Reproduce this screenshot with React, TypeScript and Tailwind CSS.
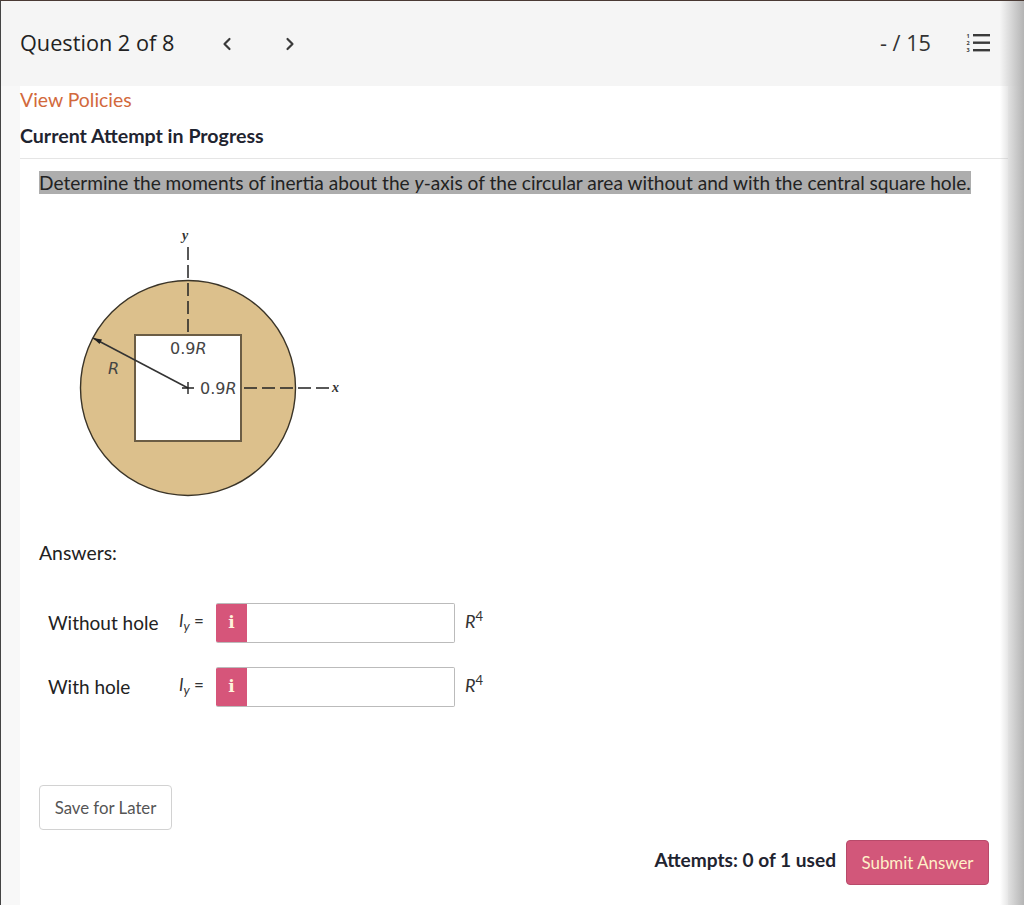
import React from 'react';
import { ChevronLeft, ChevronRight } from 'lucide-react';

function NumberedListIcon() {
  return (
    <svg width="24" height="21" viewBox="0 0 24 21" className="text-[#3a3a3a]">
      <rect x="7" y="2" width="17" height="2.4" fill="currentColor" />
      <rect x="7" y="9.5" width="17" height="2.4" fill="currentColor" />
      <rect x="7" y="17" width="17" height="2.4" fill="currentColor" />
      <text x="0.5" y="5.5" fontSize="5.5" fontWeight="700" fill="currentColor">1</text>
      <text x="0.5" y="12.5" fontSize="5.5" fontWeight="700" fill="currentColor">2</text>
      <text x="0.5" y="19.5" fontSize="5.5" fontWeight="700" fill="currentColor">3</text>
    </svg>
  );
}

function Figure() {
  return (
    <svg width="300" height="290" viewBox="0 0 300 290" className="block">
      <circle cx="128" cy="168" r="107.5" fill="#dcc08c" stroke="#3a3428" strokeWidth="1.4" />
      <rect x="75" y="115" width="106" height="106" fill="#fff" stroke="#6b5d45" strokeWidth="2" />
      <path d="M128 27V115" stroke="#222" strokeWidth="1.5" strokeDasharray="13 5" />
      <path d="M184 168H271" stroke="#222" strokeWidth="1.5" strokeDasharray="13 5" />
      <path d="M33 118L128 168" stroke="#333" strokeWidth="1.5" />
      <path d="M33 118L42 119.5L39.5 124Z" fill="#222" />
      <path d="M122 168H134M128 162V174" stroke="#222" strokeWidth="1.4" />
      <g fontFamily="'DejaVu Sans', sans-serif" fontSize="16" fill="#444">
        <text x="110" y="134">0.9<tspan fontStyle="italic">R</tspan></text>
        <text x="140" y="174">0.9<tspan fontStyle="italic">R</tspan></text>
        <text x="48" y="154" fontStyle="italic">R</text>
      </g>
      <g fontFamily="'Liberation Serif', serif" fontSize="14" fontWeight="700" fontStyle="italic" fill="#333">
        <text x="122" y="20">y</text>
        <text x="272" y="172">x</text>
      </g>
    </svg>
  );
}

function AnswerRow({ label }: { label: string }) {
  return (
    <div className="flex items-center h-10">
      <span className="w-[131px] text-[19px] text-[#222]">{label}</span>
      <span className="w-[37px] text-[17px] text-[#333] -mt-1">
        <i>I</i>
        <sub className="italic text-[13px]">y</sub> =
      </span>
      <div className="flex w-[239px] h-10 rounded-[2px] overflow-hidden border border-[#bbb] border-l-0">
        <div className="w-[31px] bg-[#d6557a] flex items-center justify-center text-[#fff3dc] font-bold text-[17px] font-['DejaVu_Serif',serif]">
          i
        </div>
        <input className="flex-1 min-w-0 bg-white outline-none" />
      </div>
      <span className="ml-[10px] text-[18px] text-[#333] -mt-1">
        <i>R</i>
        <sup className="text-[13px]">4</sup>
      </span>
    </div>
  );
}

export default function App() {
  return (
    <div className="relative w-[1024px] h-[905px] overflow-hidden flex flex-col bg-[#f8f8f8] border-t border-l border-t-[#4a3a34] border-l-[#444] font-['Lato',sans-serif]">
      <header className="h-[85px] shrink-0 bg-[#f5f5f5] flex items-center pl-[19px] pr-[34px] text-[#222] font-['Open_Sans',sans-serif]">
        <span className="text-[21.7px] w-[197px] -mt-[1px]">Question 2 of 8</span>
        <ChevronLeft size={20} strokeWidth={2.6} className="text-[#3a3a3a]" />
        <ChevronRight size={20} strokeWidth={2.6} className="text-[#3a3a3a] ml-[43px]" />
        <span className="ml-auto text-[21.7px] text-[#333] -mt-[1px]">- / 15</span>
        <span className="ml-[35px] -mt-[2px]"><NumberedListIcon /></span>
      </header>

      <div className="flex flex-1 min-h-0">
        <div className="w-[19px] shrink-0" />
        <main className="w-[988px] bg-white flex flex-col">
          <a className="text-[19.4px] leading-[27px] text-[#d2693c]">View Policies</a>
          <h2 className="text-[19.6px] leading-[27px] font-bold text-[#1f2430] mt-[9px] pb-[9px] border-b border-[#e5e5e5]">
            Current Attempt in Progress
          </h2>

          <div className="relative flex-1 pl-[19px] pr-[30px] pt-[10px]">
            <p className="text-[19.1px] leading-[27px] text-[#222]">
              <span className="bg-[#adadad]">
                Determine the moments of inertia about the <i>y</i>-axis of the circular area without and with the central square hole.
              </span>
            </p>

            <div className="ml-[21px] mt-[24px]"><Figure /></div>

            <p className="text-[19.4px] leading-[27px] text-[#222] mt-[29px]">Answers:</p>

            <div className="ml-[9px] mt-[37px] flex flex-col gap-[24px]">
              <AnswerRow label="Without hole" />
              <AnswerRow label="With hole" />
            </div>

            <button className="mt-[78px] h-[45px] w-[133px] rounded-[4px] border border-[#d2d2d2] bg-white text-[16.8px] text-[#555]">
              Save for Later
            </button>

            <div className="flex items-center justify-end gap-[10px] mt-[10px] mr-[-11px]">
              <span className="text-[19.1px] font-bold text-[#1f2430] -mt-1">Attempts: 0 of 1 used</span>
              <button className="h-[45px] w-[143px] rounded-[4px] bg-[#d2577a] border border-[#b84a6a] text-[16.9px] text-[#fff0c8]">
                Submit Answer
              </button>
            </div>
          </div>
        </main>
      </div>

      <div className="absolute top-0 right-0 bottom-0 w-[24px] bg-gradient-to-r from-transparent to-[#b4b4b4]" />
    </div>
  );
}
